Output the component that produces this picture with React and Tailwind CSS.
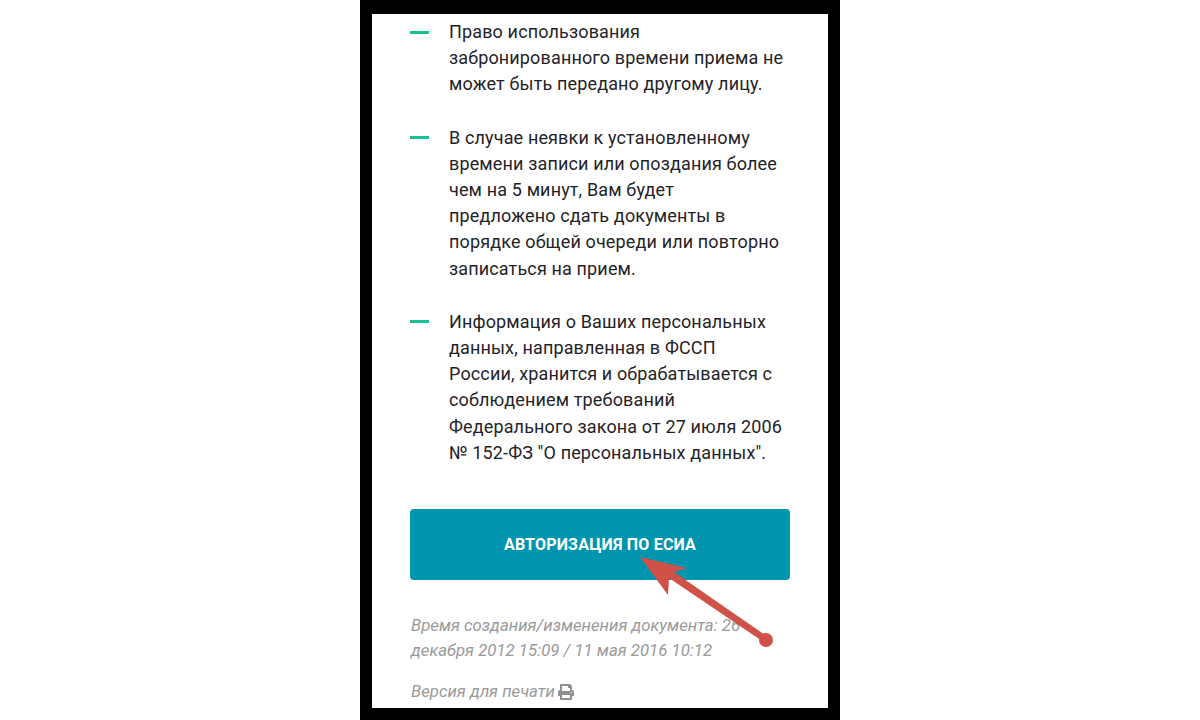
import React from 'react';
import { FaPrint } from 'react-icons/fa';

const items = [
  ['Право использования', 'забронированного времени приема не', 'может быть передано другому лицу.'],
  ['В случае неявки к установленному', 'времени записи или опоздания более', 'чем на 5 минут, Вам будет', 'предложено сдать документы в', 'порядке общей очереди или повторно', 'записаться на прием.'],
  ['Информация о Ваших персональных', 'данных, направленная в ФССП', 'России, хранится и обрабатывается с', 'соблюдением требований', 'Федерального закона от 27 июля 2006', '№ 152-ФЗ "О персональных данных".'],
];

export default function App() {
  return (
    <div className="h-[720px] bg-white font-['Roboto',sans-serif] overflow-hidden">
      <div className="relative mx-auto w-[480px] h-[720px] bg-black px-3 pt-3.5 pb-3">
        <div className="h-full bg-white px-[38px] pt-[5px] overflow-hidden">
          <ul className="flex flex-col gap-[27px]">
            {items.map((lines, i) => (
              <li key={i} className="flex">
                <span className="w-[19px] h-[3px] mt-[11.5px] bg-[#14c08e] shrink-0" />
                <p className="ml-[20px] text-[18px] leading-[26.2px] tracking-[0.14px] text-[#1f2328] whitespace-nowrap">
                  {lines.map((l, j) => <span key={j} className="block">{l}</span>)}
                </p>
              </li>
            ))}
          </ul>
          <button className="mt-[43px] w-full h-[71px] rounded-[4px] bg-[#0095ae] text-white font-bold text-[16px] tracking-[0.2px]">
            АВТОРИЗАЦИЯ ПО ЕСИА
          </button>
          <div className="pl-px text-[16.8px] leading-[25px] italic text-[#9a9a9a]">
            <p className="mt-[33px] whitespace-nowrap">
              Время создания/изменения документа: 26<br />декабря 2012 15:09 / 11 мая 2016 10:12
            </p>
            <a className="mt-[16px] flex items-center">
              Версия для печати<FaPrint className="ml-[3px] w-4 h-4 text-[#8f8f8f]" />
            </a>
          </div>
        </div>
        {/* annotation arrow over the screenshot */}
        <svg className="absolute left-0 top-0 w-[480px] h-[720px] pointer-events-none" viewBox="360 0 480 720">
          <path d="M640 557 L687 568 L674 572 L768 637 L765 643 L669 578 L668 595 Z" fill="#cf5148" />
          <circle cx="766" cy="640" r="7" fill="#cf5148" />
        </svg>
      </div>
    </div>
  );
}
